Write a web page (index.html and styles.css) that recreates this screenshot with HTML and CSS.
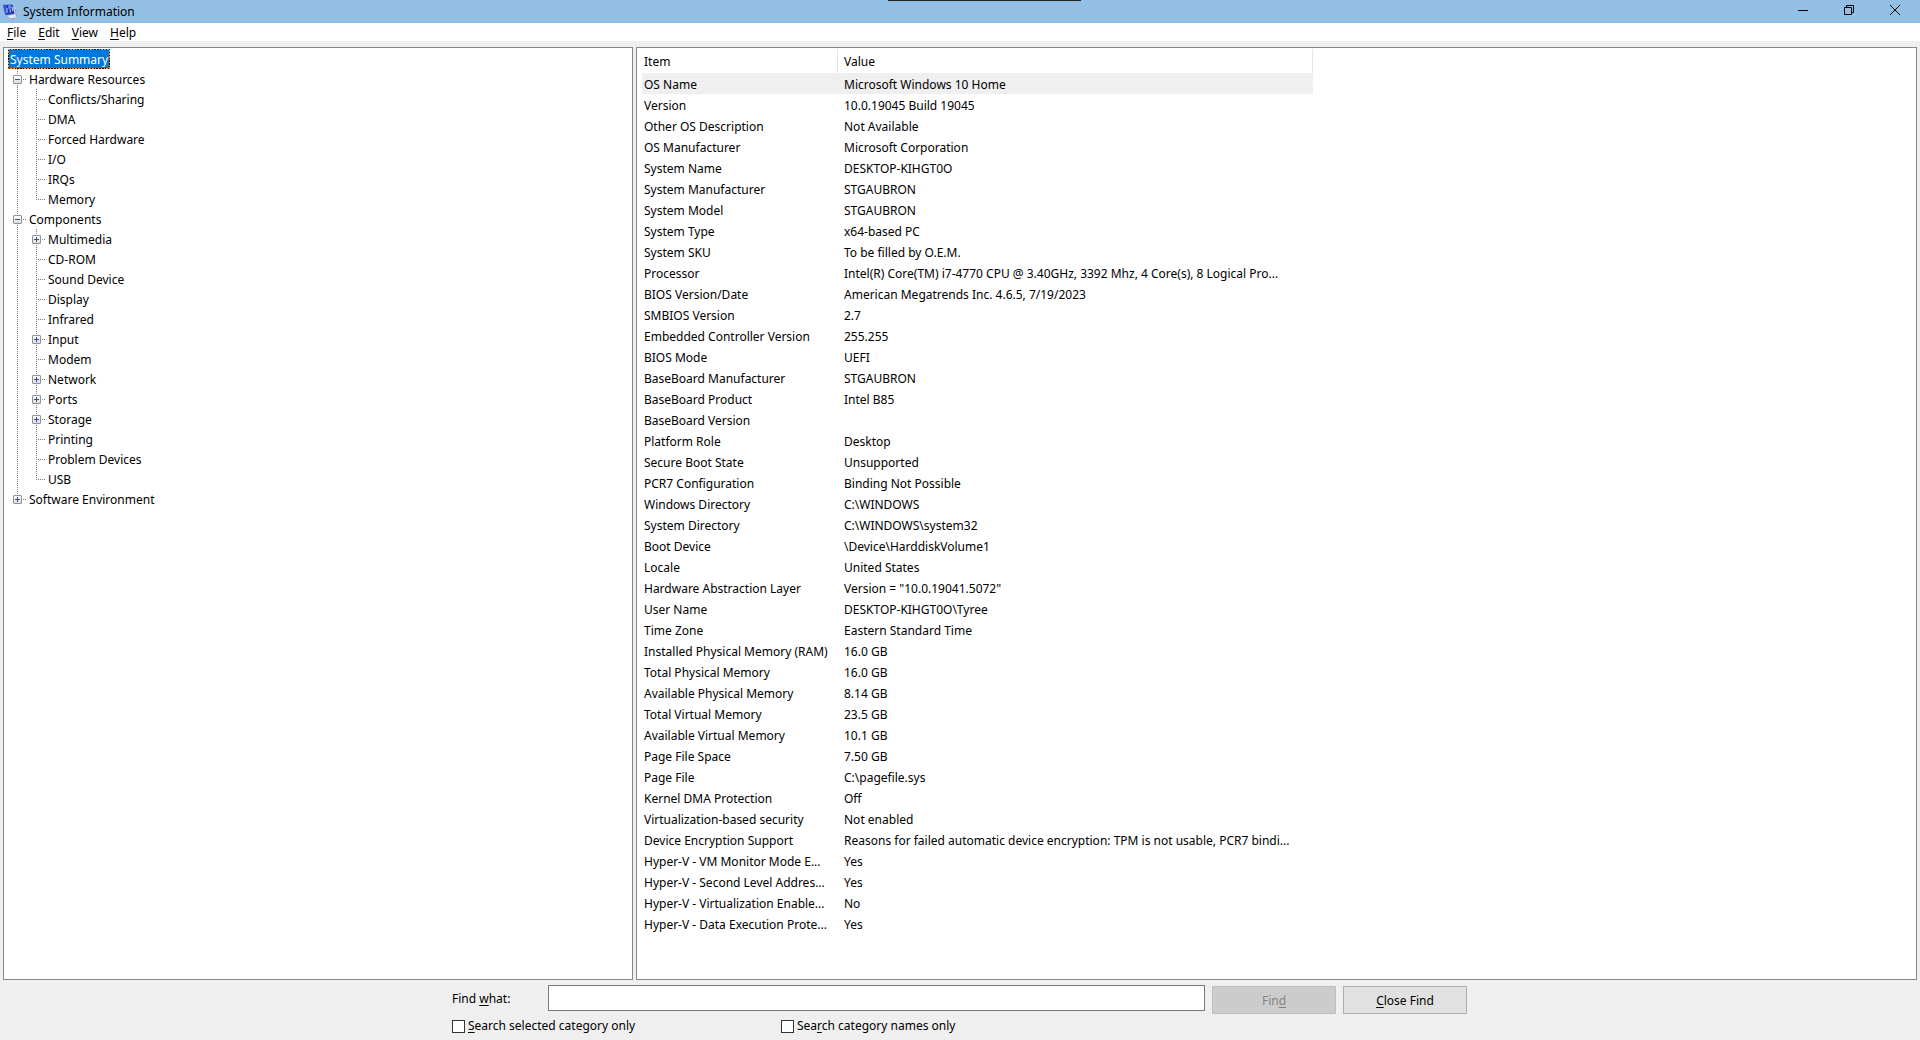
FILE: index.html
```
<!DOCTYPE html>
<html lang="en">
<head>
<meta charset="utf-8">
<title>System Information</title>
<link rel="stylesheet" href="styles.css">
</head>
<body>
<header class="titlebar">
  <svg class="app-icon" viewBox="0 0 16 16" aria-hidden="true">
    <path d="M10 3l3.500 1 1.500 9-4 1z" fill="#d5dcec"/>
    <path d="M13 4.500l1.500 8" stroke="#8894b8" fill="none"/>
    <path d="M1 1l9.500-.5 2 9.500-9 1z" fill="#2238b4"/>
    <path d="M1 1l3-.2 1.500 8.200-2.500 1z" fill="#3c58d0"/>
    <path d="M6 1.500l3-.2.6 3-3 .6z" fill="#6f8df0"/>
    <path d="M5 4v5M8 5l.5 3.500M10 3l.8 4" stroke="#b9cbff" fill="none"/>
    <path d="M5 12l5-1 4 2.500-6 2z" fill="#e8ecf6"/>
    <path d="M5 12.500l4 2.500 4-1" stroke="#8a98bd" fill="none"/>
  </svg>
  <h1 class="title">System Information</h1>
  <div class="window-buttons">
    <button class="window-button" aria-label="Minimize"><svg viewBox="0 0 10 10"><path d="M0 5.500h10"/></svg></button>
    <button class="window-button" aria-label="Restore"><svg viewBox="0 0 10 10"><path d="M.5 2.500h7v7h-7zM2.500 2.500v-2h7v7h-2"/></svg></button>
    <button class="window-button" aria-label="Close"><svg viewBox="0 0 10 10"><path d="M0 0l10 10M10 0L0 10"/></svg></button>
  </div>
  <div class="top-edge"></div>
</header>
<nav class="menubar">
  <button class="menu"><u>F</u>ile</button>
  <button class="menu"><u>E</u>dit</button>
  <button class="menu"><u>V</u>iew</button>
  <button class="menu"><u>H</u>elp</button>
</nav>
<main class="panes">
  <section class="pane tree" aria-label="Categories">
    <div class="row"><span class="label selected">System Summary</span></div>
    <ul class="branch">
      <li><div class="row"><span class="joint"><button class="toggle open" aria-label="Collapse"></button></span><span class="label">Hardware Resources</span></div>
        <ul class="branch">
          <li><div class="row"><span class="joint"></span><span class="label">Conflicts/Sharing</span></div></li>
          <li><div class="row"><span class="joint"></span><span class="label">DMA</span></div></li>
          <li><div class="row"><span class="joint"></span><span class="label">Forced Hardware</span></div></li>
          <li><div class="row"><span class="joint"></span><span class="label">I/O</span></div></li>
          <li><div class="row"><span class="joint"></span><span class="label">IRQs</span></div></li>
          <li><div class="row"><span class="joint"></span><span class="label">Memory</span></div></li>
        </ul>
      </li>
      <li><div class="row"><span class="joint"><button class="toggle open" aria-label="Collapse"></button></span><span class="label">Components</span></div>
        <ul class="branch">
          <li><div class="row"><span class="joint"><button class="toggle" aria-label="Expand"></button></span><span class="label">Multimedia</span></div></li>
          <li><div class="row"><span class="joint"></span><span class="label">CD-ROM</span></div></li>
          <li><div class="row"><span class="joint"></span><span class="label">Sound Device</span></div></li>
          <li><div class="row"><span class="joint"></span><span class="label">Display</span></div></li>
          <li><div class="row"><span class="joint"></span><span class="label">Infrared</span></div></li>
          <li><div class="row"><span class="joint"><button class="toggle" aria-label="Expand"></button></span><span class="label">Input</span></div></li>
          <li><div class="row"><span class="joint"></span><span class="label">Modem</span></div></li>
          <li><div class="row"><span class="joint"><button class="toggle" aria-label="Expand"></button></span><span class="label">Network</span></div></li>
          <li><div class="row"><span class="joint"><button class="toggle" aria-label="Expand"></button></span><span class="label">Ports</span></div></li>
          <li><div class="row"><span class="joint"><button class="toggle" aria-label="Expand"></button></span><span class="label">Storage</span></div></li>
          <li><div class="row"><span class="joint"></span><span class="label">Printing</span></div></li>
          <li><div class="row"><span class="joint"></span><span class="label">Problem Devices</span></div></li>
          <li><div class="row"><span class="joint"></span><span class="label">USB</span></div></li>
        </ul>
      </li>
      <li><div class="row"><span class="joint"><button class="toggle" aria-label="Expand"></button></span><span class="label">Software Environment</span></div></li>
    </ul>
  </section>
  <section class="pane details" aria-label="Details">
    <table class="list">
      <colgroup><col class="col-item"><col class="col-value"></colgroup>
      <thead><tr><th>Item</th><th>Value</th></tr></thead>
      <tbody>
        <tr class="current"><td>OS Name</td><td>Microsoft Windows 10 Home</td></tr>
        <tr><td>Version</td><td>10.0.19045 Build 19045</td></tr>
        <tr><td>Other OS Description</td><td>Not Available</td></tr>
        <tr><td>OS Manufacturer</td><td>Microsoft Corporation</td></tr>
        <tr><td>System Name</td><td>DESKTOP-KIHGT0O</td></tr>
        <tr><td>System Manufacturer</td><td>STGAUBRON</td></tr>
        <tr><td>System Model</td><td>STGAUBRON</td></tr>
        <tr><td>System Type</td><td>x64-based PC</td></tr>
        <tr><td>System SKU</td><td>To be filled by O.E.M.</td></tr>
        <tr><td>Processor</td><td>Intel(R) Core(TM) i7-4770 CPU @ 3.40GHz, 3392 Mhz, 4 Core(s), 8 Logical Pro...</td></tr>
        <tr><td>BIOS Version/Date</td><td>American Megatrends Inc. 4.6.5, 7/19/2023</td></tr>
        <tr><td>SMBIOS Version</td><td>2.7</td></tr>
        <tr><td>Embedded Controller Version</td><td>255.255</td></tr>
        <tr><td>BIOS Mode</td><td>UEFI</td></tr>
        <tr><td>BaseBoard Manufacturer</td><td>STGAUBRON</td></tr>
        <tr><td>BaseBoard Product</td><td>Intel B85</td></tr>
        <tr><td>BaseBoard Version</td><td></td></tr>
        <tr><td>Platform Role</td><td>Desktop</td></tr>
        <tr><td>Secure Boot State</td><td>Unsupported</td></tr>
        <tr><td>PCR7 Configuration</td><td>Binding Not Possible</td></tr>
        <tr><td>Windows Directory</td><td>C:\WINDOWS</td></tr>
        <tr><td>System Directory</td><td>C:\WINDOWS\system32</td></tr>
        <tr><td>Boot Device</td><td>\Device\HarddiskVolume1</td></tr>
        <tr><td>Locale</td><td>United States</td></tr>
        <tr><td>Hardware Abstraction Layer</td><td>Version = "10.0.19041.5072"</td></tr>
        <tr><td>User Name</td><td>DESKTOP-KIHGT0O\Tyree</td></tr>
        <tr><td>Time Zone</td><td>Eastern Standard Time</td></tr>
        <tr><td>Installed Physical Memory (RAM)</td><td>16.0 GB</td></tr>
        <tr><td>Total Physical Memory</td><td>16.0 GB</td></tr>
        <tr><td>Available Physical Memory</td><td>8.14 GB</td></tr>
        <tr><td>Total Virtual Memory</td><td>23.5 GB</td></tr>
        <tr><td>Available Virtual Memory</td><td>10.1 GB</td></tr>
        <tr><td>Page File Space</td><td>7.50 GB</td></tr>
        <tr><td>Page File</td><td>C:\pagefile.sys</td></tr>
        <tr><td>Kernel DMA Protection</td><td>Off</td></tr>
        <tr><td>Virtualization-based security</td><td>Not enabled</td></tr>
        <tr><td>Device Encryption Support</td><td>Reasons for failed automatic device encryption: TPM is not usable, PCR7 bindi...</td></tr>
        <tr><td>Hyper-V - VM Monitor Mode E...</td><td>Yes</td></tr>
        <tr><td>Hyper-V - Second Level Addres...</td><td>Yes</td></tr>
        <tr><td>Hyper-V - Virtualization Enable...</td><td>No</td></tr>
        <tr><td>Hyper-V - Data Execution Prote...</td><td>Yes</td></tr>
      </tbody>
    </table>
  </section>
</main>
<form class="find">
  <div class="find-row">
    <label class="find-label" for="what">Find <u>w</u>hat:</label>
    <input class="find-input" id="what" type="text">
    <button class="push" type="button" disabled>Fin<u>d</u></button>
    <button class="push" type="button"><u>C</u>lose Find</button>
  </div>
  <div class="options">
    <div class="option"><input class="check" id="selected" type="checkbox"><label for="selected"><u>S</u>earch selected category only</label></div>
    <div class="option"><input class="check" id="names" type="checkbox"><label for="names">Sea<u>r</u>ch category names only</label></div>
  </div>
</form>
</body>
</html>
```
FILE: styles.css
```
* { box-sizing: border-box; }

body {
  margin: 0;
  min-height: 100vh;
  display: flex;
  flex-direction: column;
  background: #efefef;
  color: #000;
  font: 12px/18px "Noto Sans", "Open Sans", sans-serif;
}

button, input { font: inherit; color: inherit; }

u { text-underline-offset: 2px; }

.titlebar {
  position: relative;
  display: flex;
  align-items: center;
  height: 23px;
  padding: 0 2px;
  background: #94bfe4;
}

.app-icon { width: 16px; height: 16px; }

.title { flex: 1; margin: 0 0 0 5px; font-size: 12px; font-weight: 400; }

.top-edge {
  position: absolute;
  top: 0;
  left: 46.25%;
  width: 193px;
  height: 1px;
  background: #222;
}

.window-buttons { display: flex; }

.window-button {
  display: flex;
  align-items: center;
  justify-content: center;
  width: 46px;
  height: 20px;
  margin-bottom: 3px;
  padding: 0;
  border: 0;
  background: none;
}

.window-button svg { width: 10px; height: 10px; fill: none; stroke: #000; }

.menubar { display: flex; height: 18px; padding-left: 1px; background: #fff; }

.menu { height: 18px; padding: 1px 6px 0; border: 0; background: none; line-height: 18px; }

.panes {
  flex: 1;
  display: grid;
  grid-template-columns: 630fr 1281fr;
  gap: 3px;
  padding: 6px 3px 0;
}

.pane { border: 1px solid #828790; background: #fff; min-width: 0; }

.tree { padding: 1px 4px; }

.branch {
  --dots: repeating-linear-gradient(#808080 0 1px, transparent 1px 2px);
  list-style: none;
  margin: 0;
  padding: 0;
}

.branch .branch { padding-left: 19px; }

.branch > li { background: var(--dots) 9px 0 / 1px 100% no-repeat; }

.branch > li:last-child { background-size: 1px 10px; }

.row { display: flex; height: 20px; }

.joint {
  display: flex;
  align-items: center;
  justify-content: center;
  width: 19px;
  background: repeating-linear-gradient(90deg, #808080 0 1px, transparent 1px 2px) 9px 10px / 10px 1px no-repeat;
}

.toggle {
  width: 9px;
  height: 9px;
  padding: 0;
  border: 1px solid #919191;
  border-radius: 1px;
  background:
    linear-gradient(#3a4f9c, #3a4f9c) center / 5px 1px no-repeat,
    linear-gradient(#3a4f9c, #3a4f9c) center / 1px 5px no-repeat,
    linear-gradient(#fff, #ddd);
}

.toggle.open {
  background:
    linear-gradient(#3a4f9c, #3a4f9c) center / 5px 1px no-repeat,
    linear-gradient(#fff, #ddd);
}

.label { padding: 2px 2px 0; line-height: 18px; white-space: nowrap; }

.selected {
  padding: 1px 1px 0;
  border: 1px solid;
  border-image: repeating-conic-gradient(#ff8728 0 25%, #000 0 50%) 1;
  border-image: repeating-linear-gradient(45deg, #ff8728 0 1px, #201000 1px 2px) 1;
  background: #0078d7;
  color: #fff;
}

.details { padding: 1px 5px; }

.list { width: 671px; table-layout: fixed; border-collapse: separate; border-spacing: 0; }

.col-item { width: 196px; }

.list th, .list td {
  overflow: hidden;
  padding: 2px 0 0 2px;
  font-weight: 400;
  text-align: left;
  white-space: nowrap;
}

.list th { height: 24px; border-right: 1px solid #e5e5e5; }

.list td { height: 21px; }

.list th + th, .list td + td { padding-left: 6px; }

.current { background: #efefef; }

.find { width: 1016px; max-width: 100%; height: 60px; margin: 0 auto; padding: 5px 1px 0 0; }

.find-row { display: flex; gap: 7px; height: 29px; }

.find-label { width: 89px; padding-top: 5px; }

.find-input { flex: 1; height: 26px; padding: 0 4px; border: 1px solid #7a7a7a; background: #fff; }

.push {
  width: 124px;
  height: 28px;
  margin-top: 1px;
  padding: 1px 0 0;
  border: 1px solid #adadad;
  background: #e1e1e1;
}

.push:disabled { border-color: #bfbfbf; background: #ccc; color: #838383; }

.options { display: flex; }

.option { display: flex; align-items: center; gap: 3px; width: 329px; height: 24px; }

.check {
  appearance: none;
  width: 13px;
  height: 13px;
  margin: 0;
  border: 1px solid #333;
  background: #fff;
}
```
